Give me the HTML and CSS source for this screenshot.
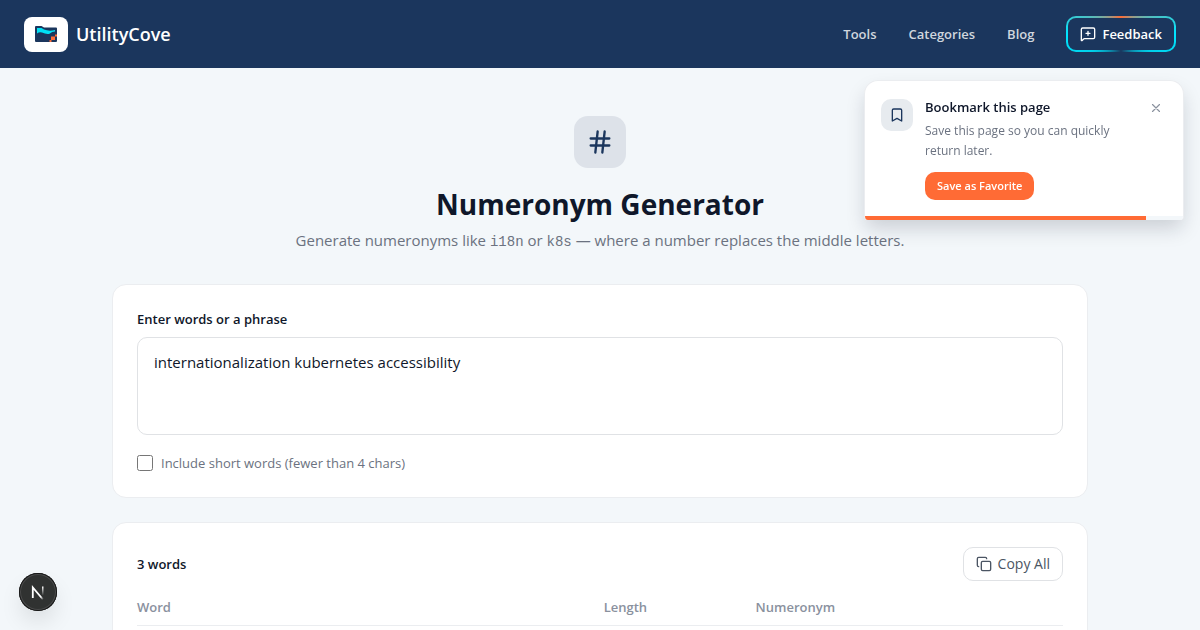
FILE: index.html
```html
<!DOCTYPE html>
<html lang="en">
<head>
<meta charset="utf-8">
<meta name="viewport" content="width=device-width, initial-scale=1">
<title>Numeronym Generator | UtilityCove</title>
<link rel="stylesheet" href="styles.css">
</head>
<body>
<header class="site-header">
  <a class="brand" href="#">
    <span class="brand-mark">
      <svg width="22" height="16" viewBox="0 0 22 16" aria-hidden="true">
        <path d="M0 1Q0 0 1 0H6.500L9 1.500H21Q22 1.500 22 2.500V15Q22 16 21 16H1Q0 16 0 15Z" fill="#1b365d"/>
        <path d="M2 2H6.500L9 3.500Q14 5.500 20 4V5.500Q17 5.500 14.500 7.800Q11 8.500 7 6.500Q4.500 5.500 2 7.500Z" fill="#00e1f5"/>
        <path d="M16 10.500H20V14H16ZM20 8.500H22V10.500H20ZM14.500 14H16.500V16H14.500Z" fill="#ff6b35"/>
      </svg>
    </span>
    <span class="brand-name">UtilityCove</span>
  </a>
  <nav class="site-nav" aria-label="Main">
    <a href="#">Tools</a>
    <a href="#">Categories</a>
    <a href="#">Blog</a>
    <button class="feedback" type="button">
      <svg class="icon" width="16" height="16" viewBox="0 0 24 24" aria-hidden="true"><path d="M22 17a2 2 0 0 1-2 2H6.828a2 2 0 0 0-1.414.586l-2.202 2.202A.71.71 0 0 1 2 21.286V5a2 2 0 0 1 2-2h16a2 2 0 0 1 2 2zM12 8v6M9 11h6"/></svg>
      Feedback
    </button>
  </nav>
</header>

<main class="page">
  <div class="intro">
    <span class="tool-mark">
      <svg class="icon" width="28" height="28" viewBox="0 0 24 24" aria-hidden="true"><path d="M4 9h16M4 15h16M10 3 8 21M16 3l-2 18"/></svg>
    </span>
    <h1>Numeronym Generator</h1>
    <p>Generate numeronyms like <code>i18n</code> or <code>k8s</code> — where a number replaces the middle letters.</p>
  </div>

  <section class="card">
    <label class="field-label" for="words">Enter words or a phrase</label>
    <textarea id="words" class="words" spellcheck="false">internationalization kubernetes accessibility</textarea>
    <label class="option" for="short"><input id="short" type="checkbox">Include short words (fewer than 4 chars)</label>
  </section>

  <section class="card">
    <div class="results-head">
      <h2>3 words</h2>
      <button class="copy" type="button">
        <svg class="icon" width="16" height="16" viewBox="0 0 24 24" aria-hidden="true"><rect x="8" y="8" width="14" height="14" rx="2"/><path d="M4 16c-1.100 0-2-.9-2-2V4c0-1.100.9-2 2-2h10c1.100 0 2 .9 2 2"/></svg>
        Copy All
      </button>
    </div>
    <table class="results">
      <thead>
        <tr><th class="col-word" scope="col">Word</th><th class="col-length" scope="col">Length</th><th scope="col">Numeronym</th></tr>
      </thead>
    </table>
  </section>
</main>

<aside class="toast" aria-label="Bookmark this page">
  <div class="toast-body">
    <span class="toast-mark">
      <svg class="icon" width="16" height="16" viewBox="0 0 24 24" aria-hidden="true"><path d="m19 21-7-4-7 4V5a2 2 0 0 1 2-2h10a2 2 0 0 1 2 2z"/></svg>
    </span>
    <div class="toast-text">
      <h3>Bookmark this page</h3>
      <p>Save this page so you can quickly return later.</p>
      <button class="save" type="button">Save as Favorite</button>
    </div>
    <button class="close" type="button" aria-label="Dismiss">
      <svg class="icon" width="14" height="14" viewBox="0 0 24 24" aria-hidden="true"><path d="M18 6 6 18M6 6l12 12"/></svg>
    </button>
  </div>
  <div class="toast-track"><div class="toast-bar" style="width: 88.400%"></div></div>
</aside>

<button class="dev-badge" type="button" aria-label="Developer tools">
  <svg width="38" height="38" viewBox="0 0 38 38" aria-hidden="true">
    <defs>
      <linearGradient id="fade-diagonal" gradientUnits="userSpaceOnUse" x1="19" y1="19" x2="25" y2="26"><stop offset="0" stop-color="#fff"/><stop offset="0.600" stop-color="#fff"/><stop offset="1" stop-color="#fff" stop-opacity="0"/></linearGradient>
      <linearGradient id="fade-stem" x1="0" y1="0" x2="0" y2="1"><stop offset="0" stop-color="#fff"/><stop offset="1" stop-color="#fff" stop-opacity="0"/></linearGradient>
    </defs>
    <path d="M13.800 25V14.500L24 26.500" fill="none" stroke="url(#fade-diagonal)" stroke-width="1.800"/>
    <rect x="23" y="13.500" width="1.500" height="9" fill="url(#fade-stem)"/>
  </svg>
</button>
</body>
</html>
```
FILE: styles.css
```css
* { box-sizing: border-box; }

body {
  margin: 0;
  background: #f3f7fa;
  color: #0f172a;
  font-family: "Open Sans", "Noto Sans", sans-serif;
  font-size: 15px;
  line-height: 24px;
}

h1, h2, h3, p { margin: 0; }
button, textarea { font: inherit; }
button { cursor: pointer; }

.icon {
  flex: none;
  fill: none;
  stroke: currentColor;
  stroke-width: 2;
  stroke-linecap: round;
  stroke-linejoin: round;
}

.site-header {
  display: flex;
  align-items: center;
  justify-content: space-between;
  padding: 16px 24px;
  background: #1b365d;
}

.brand {
  display: flex;
  align-items: center;
  gap: 8px;
  color: #fff;
  text-decoration: none;
}
.brand-mark {
  display: grid;
  place-items: center;
  width: 44px;
  height: 35px;
  border-radius: 8px;
  background: #fff;
}
.brand-name { font-size: 18px; font-weight: 600; }

.site-nav {
  display: flex;
  align-items: center;
  gap: 32px;
  font-size: 13px;
  font-weight: 600;
}
.site-nav a { color: #d0d6de; text-decoration: none; }

.feedback {
  display: flex;
  align-items: center;
  gap: 6px;
  height: 36px;
  padding: 0 12px;
  border: 2px solid transparent;
  border-radius: 10px;
  background:
    linear-gradient(#1b365d, #1b365d) padding-box,
    conic-gradient(#ff6b35, #00e5ff 90deg, #00d0ea 120deg, #1b365d 180deg, #00d0ea 240deg, #00e5ff 270deg, #ff6b35) border-box;
  color: #fff;
  font-size: 13px;
  font-weight: 600;
}

.page {
  display: flex;
  flex-direction: column;
  gap: 24px;
  max-width: 1024px;
  margin: 0 auto;
  padding: 48px 24px;
}

.intro {
  display: flex;
  flex-direction: column;
  align-items: center;
  margin-bottom: 6px;
  text-align: center;
}
.tool-mark {
  display: grid;
  place-items: center;
  width: 52px;
  height: 52px;
  margin-bottom: 16px;
  border-radius: 14px;
  background: #dde2e9;
  color: #1b365d;
}
.intro h1 { margin-bottom: 4px; font-size: 28px; font-weight: 700; line-height: 40px; }
.intro p { color: #6b7280; }
.intro code { font-family: "Liberation Mono", monospace; font-size: 14px; }

.card {
  padding: 24px;
  border: 1px solid #ebedf0;
  border-radius: 14px;
  background: #fff;
}

.field-label { display: block; margin-bottom: 8px; font-size: 13px; font-weight: 600; line-height: 20px; }
.words {
  display: block;
  width: 100%;
  height: 98px;
  padding: 12px 16px;
  border: 1px solid #e0e2e5;
  border-radius: 10px;
  background: #fff;
  color: #0f172a;
  resize: none;
}
.option {
  display: flex;
  align-items: center;
  gap: 8px;
  margin-top: 18px;
  color: #6b7280;
  font-size: 13px;
  line-height: 20px;
}
.option input { width: 16px; height: 16px; margin: 0; }

.results-head {
  display: flex;
  align-items: center;
  justify-content: space-between;
  margin-bottom: 16px;
}
.results-head h2 { font-size: 13px; font-weight: 600; }
.copy {
  display: flex;
  align-items: center;
  gap: 6px;
  height: 34px;
  padding: 0 12px;
  border: 1px solid #e0e2e5;
  border-radius: 10px;
  background: #fff;
  color: #4b5563;
  font-size: 14px;
  font-weight: 500;
}

.results { width: 100%; border-collapse: collapse; table-layout: fixed; }
.results th {
  padding: 0 0 8px;
  border-bottom: 1px solid #ebedf0;
  color: #8a919e;
  font-size: 13px;
  font-weight: 600;
  line-height: 20px;
  text-align: left;
}
.col-word { width: 50.400%; }
.col-length { width: 16.400%; }

.toast {
  position: fixed;
  top: 80px;
  right: 16px;
  width: 320px;
  overflow: hidden;
  border: 1px solid #ebedf0;
  border-bottom: 0;
  border-radius: 14px 14px 4px 4px;
  background: #fff;
  box-shadow: 0 10px 20px -2px rgb(15 23 42 / 18%);
}
.toast-body { display: flex; gap: 12px; padding: 16px; }
.toast-mark {
  display: grid;
  flex: none;
  place-items: center;
  width: 32px;
  height: 32px;
  margin-top: 2px;
  border-radius: 10px;
  background: #e7ebef;
  color: #1b365d;
}
.toast-text { flex: 1; }
.toast-text h3 { margin-bottom: 4px; font-size: 13px; font-weight: 600; line-height: 20px; }
.toast-text p { margin-bottom: 11px; color: #6b7280; font-size: 12px; line-height: 20px; }
.save {
  display: block;
  height: 28px;
  padding: 0 12px;
  border: 0;
  border-radius: 10px;
  background: #ff6b35;
  color: #fff;
  font-size: 11px;
  font-weight: 600;
}
.close {
  display: grid;
  place-items: center;
  align-self: flex-start;
  width: 22px;
  height: 22px;
  padding: 0;
  border: 0;
  background: none;
  color: #8a919e;
}
.toast-track { height: 4px; background: #f3f7fa; }
.toast-bar { height: 4px; background: #ff6b35; }

.dev-badge {
  position: fixed;
  bottom: 19px;
  left: 19px;
  width: 38px;
  height: 38px;
  padding: 0;
  border: 0;
  border-radius: 50%;
  background: #303231;
  box-shadow: inset 0 0 0 1px #171717, inset 0 0 0 2px #4a4b4b, 0 12px 24px -4px rgb(0 0 0 / 14%);
}
.dev-badge svg { display: block; }
```
